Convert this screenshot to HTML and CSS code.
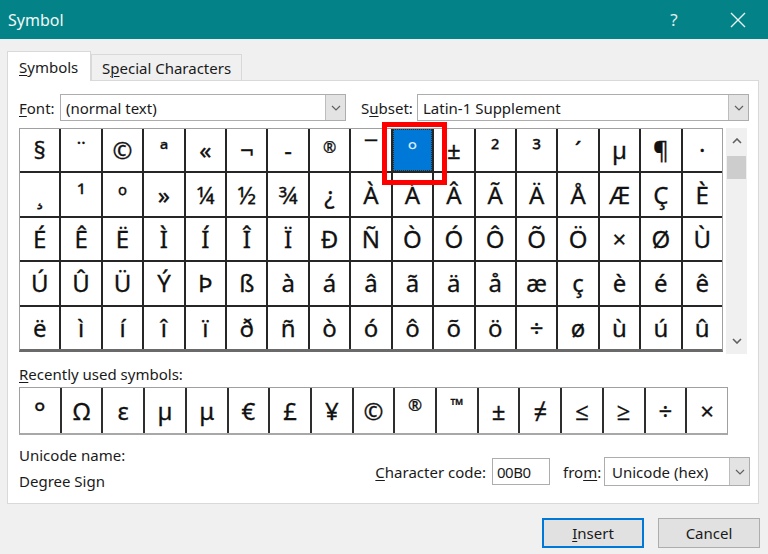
FILE: index.html
```html
<!DOCTYPE html>
<html>
<head>
<meta charset="utf-8">
<title>Symbol</title>
<link rel="stylesheet" href="styles.css">
</head>
<body>
<div class="dialog">
  <div class="titlebar">
    <span class="title">Symbol</span>
    <span class="tb-help">?</span>
    <svg class="tb-close" width="16" height="16" viewBox="0 0 16 16"><path d="M1 1L15 15M15 1L1 15" stroke="#e8f4f4" stroke-width="1.4" fill="none"/></svg>
  </div>
  <div class="body">
    <div class="tabs">
      <div class="tab active"><u>S</u>ymbols</div>
      <div class="tab">S<u>p</u>ecial Characters</div>
    </div>
    <div class="panel">
      <div class="font-row">
        <span class="lbl lbl-font"><u>F</u>ont:</span>
        <div class="select sel-font"><span class="val">(normal text)</span><span class="arrow"><svg width="10" height="6" viewBox="0 0 10 6"><path d="M1 1L5 5L9 1" stroke="#606060" stroke-width="1.2" fill="none"/></svg></span></div>
        <span class="lbl lbl-subset">S<u>u</u>bset:</span>
        <div class="select sel-subset"><span class="val">Latin-1 Supplement</span><span class="arrow"><svg width="10" height="6" viewBox="0 0 10 6"><path d="M1 1L5 5L9 1" stroke="#606060" stroke-width="1.2" fill="none"/></svg></span></div>
      </div>
      <div class="grid-wrap">
        <div class="grid">
          <div class="cell">§</div><div class="cell">¨</div><div class="cell">©</div><div class="cell">ª</div><div class="cell">«</div><div class="cell">¬</div><div class="cell">-</div><div class="cell sup">®</div><div class="cell">¯</div><div class="cell sel">°<span class="mark"></span></div><div class="cell">±</div><div class="cell">²</div><div class="cell">³</div><div class="cell">´</div><div class="cell">µ</div><div class="cell">¶</div><div class="cell">·</div>
          <div class="cell">¸</div><div class="cell">¹</div><div class="cell">º</div><div class="cell">»</div><div class="cell">¼</div><div class="cell">½</div><div class="cell">¾</div><div class="cell">¿</div><div class="cell">À</div><div class="cell">Á</div><div class="cell">Â</div><div class="cell">Ã</div><div class="cell">Ä</div><div class="cell">Å</div><div class="cell">Æ</div><div class="cell">Ç</div><div class="cell">È</div>
          <div class="cell">É</div><div class="cell">Ê</div><div class="cell">Ë</div><div class="cell">Ì</div><div class="cell">Í</div><div class="cell">Î</div><div class="cell">Ï</div><div class="cell">Ð</div><div class="cell">Ñ</div><div class="cell">Ò</div><div class="cell">Ó</div><div class="cell">Ô</div><div class="cell">Õ</div><div class="cell">Ö</div><div class="cell">×</div><div class="cell">Ø</div><div class="cell">Ù</div>
          <div class="cell">Ú</div><div class="cell">Û</div><div class="cell">Ü</div><div class="cell">Ý</div><div class="cell">Þ</div><div class="cell">ß</div><div class="cell">à</div><div class="cell">á</div><div class="cell">â</div><div class="cell">ã</div><div class="cell">ä</div><div class="cell">å</div><div class="cell">æ</div><div class="cell">ç</div><div class="cell">è</div><div class="cell">é</div><div class="cell">ê</div>
          <div class="cell">ë</div><div class="cell">ì</div><div class="cell">í</div><div class="cell">î</div><div class="cell">ï</div><div class="cell">ð</div><div class="cell">ñ</div><div class="cell">ò</div><div class="cell">ó</div><div class="cell">ô</div><div class="cell">õ</div><div class="cell">ö</div><div class="cell">÷</div><div class="cell">ø</div><div class="cell">ù</div><div class="cell">ú</div><div class="cell">û</div>
        </div>
        <div class="scrollbar">
          <div class="sb-btn"><svg width="10" height="6" viewBox="0 0 10 6"><path d="M1 5L5 1L9 5" stroke="#606060" stroke-width="1.6" fill="none"/></svg></div>
          <div class="sb-thumb"></div>
          <div class="sb-track"></div>
          <div class="sb-btn"><svg width="10" height="6" viewBox="0 0 10 6"><path d="M1 1L5 5L9 1" stroke="#606060" stroke-width="1.6" fill="none"/></svg></div>
        </div>
      </div>
      <div class="recent-label"><u>R</u>ecently used symbols:</div>
      <div class="recent">
        <div class="rcell deg">°</div><div class="rcell">Ω</div><div class="rcell">ε</div><div class="rcell">µ</div><div class="rcell">μ</div><div class="rcell">€</div><div class="rcell">£</div><div class="rcell">¥</div><div class="rcell">©</div><div class="rcell small">®</div><div class="rcell small">™</div><div class="rcell">±</div><div class="rcell">≠</div><div class="rcell">≤</div><div class="rcell">≥</div><div class="rcell">÷</div><div class="rcell">×</div>
      </div>
      <div class="info">
        <div class="uname">
          <div class="line">Unicode name:</div>
          <div class="line">Degree Sign</div>
        </div>
        <div class="code">
          <span class="lbl"><u>C</u>haracter code:</span>
          <div class="input">00B0</div>
          <span class="lbl lbl-from">fro<u>m</u>:</span>
          <div class="select sel-from"><span class="val">Unicode (hex)</span><span class="arrow"><svg width="10" height="6" viewBox="0 0 10 6"><path d="M1 1L5 5L9 1" stroke="#606060" stroke-width="1.2" fill="none"/></svg></span></div>
        </div>
      </div>
    </div>
    <div class="buttons">
      <div class="btn primary"><u>I</u>nsert</div>
      <div class="btn">Cancel</div>
    </div>
  </div>
</div>
</body>
</html>
```
FILE: styles.css
```css
* { box-sizing: border-box; }
html, body { margin: 0; padding: 0; }
body {
  width: 768px;
  height: 554px;
  overflow: hidden;
  background: #f0f0f0;
  font-family: "Noto Sans", "Open Sans", sans-serif;
  font-size: 15px;
  color: #1a1a1a;
}
u { text-decoration: underline; text-underline-offset: 2px; text-decoration-thickness: 1px; }

.titlebar {
  height: 40px;
  background: #038387;
  display: flex;
  align-items: center;
  padding-left: 8px;
  color: #f2f8f8;
  border-bottom: 1px solid #e6f0f0;
}
.title { font-size: 16px; flex: 1; }
.tb-help { font-size: 17px; width: 20px; text-align: center; margin-right: 46px; color: #e0eeee; }
.tb-close { margin-right: 22px; }

.body { padding: 11px 8px 0 7px; }

.tabs { display: flex; align-items: flex-end; height: 29px; }
.tab {
  height: 26px;
  padding: 0 10px;
  border: 1px solid #d9d9d9;
  border-bottom: none;
  background: #f0f0f0;
  display: flex;
  align-items: center;
  color: #1a1a1a;
}
.tab.active {
  width: 84px;
  padding-left: 11px;
  background: #fff;
  position: relative;
  z-index: 1;
  margin-bottom: -1px;
  height: 30px;
}

.panel {
  width: 752px;
  height: 424px;
  background: #fff;
  border: 1px solid #d9d9d9;
  padding: 13px 8px 0 11px;
}

.font-row { display: flex; align-items: center; height: 27px; }
.lbl { white-space: nowrap; }
.lbl-font { width: 41px; }
.lbl-subset { width: 56px; margin-left: 15px; }
.select {
  display: flex;
  align-items: stretch;
  border: 1px solid #adadad;
  background: #fff;
  height: 27px;
}
.select .val { flex: 1; padding-left: 5px; display: flex; align-items: center; white-space: nowrap; overflow: hidden; }
.select .arrow {
  width: 20px;
  background: #e3e3e3;
  border-left: 1px solid #bdbdbd;
  display: flex;
  align-items: center;
  justify-content: center;
}
.sel-font { width: 286px; }
.sel-subset { width: 332px; }

.grid-wrap { display: flex; align-items: flex-start; margin-top: 7px; gap: 3px; }
.grid {
  width: 704px;
  height: 224px;
  display: grid;
  grid-template-columns: repeat(17, 1fr);
  grid-template-rows: repeat(5, 1fr);
  gap: 2px;
  background: #262626;
  border: 1px solid #a0a0a0;
  border-bottom: 3px solid #6a6a6a;
}
.cell {
  background: #fff;
  display: flex;
  align-items: center;
  justify-content: center;
  font-size: 24px;
  line-height: 1;
  color: #111;
  -webkit-text-stroke: 0.3px #111;
}
.cell.sup { font-size: 16px; align-items: flex-start; padding-top: 10px; }
.cell.sel {
  position: relative;
  background: #0078d7;
  color: #d8ecff;
  -webkit-text-stroke: 0;
  outline: 1px dotted #3a2a10;
  outline-offset: -1px;
}
.cell.sel .mark {
  position: absolute;
  left: -11px;
  top: -7px;
  width: 65px;
  height: 63px;
  border: 5px solid #ff0000;
}

.scrollbar {
  width: 21px;
  height: 226px;
  background: #f0f0f0;
  display: flex;
  flex-direction: column;
}
.sb-btn { height: 26px; display: flex; align-items: center; justify-content: center; }
.sb-thumb { height: 23px; margin: 2px 1px 0; background: #cdcdcd; }
.sb-track { flex: 1; }

.recent-label { margin-top: 10px; line-height: 20px; height: 20px; }
.recent {
  margin-top: 3px;
  width: 709px;
  height: 48px;
  display: grid;
  grid-template-columns: repeat(17, 1fr);
  gap: 2px;
  background: #2e2e2e;
  border: 1px solid #a0a0a0;
  border-bottom: 2px solid #a8a8a8;
}
.rcell {
  background: #fff;
  display: flex;
  align-items: center;
  justify-content: center;
  font-size: 24px;
  line-height: 1;
  color: #111;
  -webkit-text-stroke: 0.3px #111;
}
.rcell.deg { font-size: 28px; }
.rcell.small { font-size: 17px; align-items: flex-start; padding-top: 8px; }

.info { display: flex; justify-content: space-between; margin-top: 10px; }
.uname .line { line-height: 20px; height: 20px; }
.uname .line + .line { margin-top: 6px; }
.code { display: flex; align-items: center; margin-top: 7px; }
.input {
  width: 58px;
  height: 27px;
  margin-left: 6px;
  border: 1px solid #adadad;
  padding-left: 4px;
  display: flex;
  align-items: center;
  letter-spacing: -0.5px;
}
.lbl-from { margin-left: 13px; width: 41px; }
.sel-from { width: 146px; height: 29px; }
.sel-from .val { padding-left: 7px; }

.buttons { display: flex; justify-content: flex-end; gap: 14px; margin-top: 14px; }
.btn {
  width: 102px;
  height: 30px;
  background: #e1e1e1;
  border: 1px solid #adadad;
  display: flex;
  align-items: center;
  justify-content: center;
  color: #1a1a1a;
}
.btn.primary { border: 2px solid #0078d7; }
```
